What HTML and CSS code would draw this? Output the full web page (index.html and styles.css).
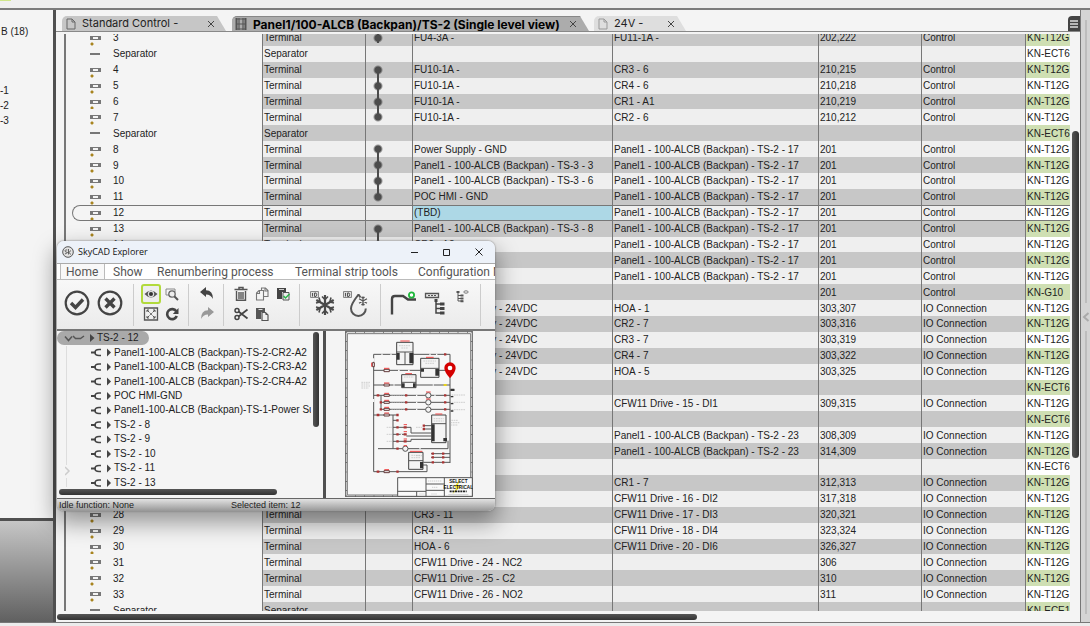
FILE: index.html
```html
<!DOCTYPE html>
<html lang="en">
<head>
<meta charset="utf-8">
<title>SkyCAD</title>
<link rel="stylesheet" href="styles.css">
</head>
<body>
<div class="app">
  <div class="topbar"><span class="topmark"></span></div>
  <div class="work">
    <aside class="side">
      <div class="side-tree">
        <p class="side-root">B (18)</p>
        <p>-1</p>
        <p>-2</p>
        <p>-3</p>
      </div>
      <div class="side-preview"></div>
    </aside>
    <main class="doc">
      <nav class="tabs">
        <div class="tab tab-first">
          <svg class="ico-doc" viewBox="0 0 10 12"><path d="M1 1h5l3 3v7H1zM6 1v3h3" fill="none" stroke="#666"/></svg>
          <a href="#">Standard Control -</a>
          <button class="x" aria-label="Close Standard Control"><svg viewBox="0 0 8 8"><path d="m1 1 6 6m0-6-6 6" stroke="#444"/></svg></button>
        </div>
        <div class="tab tab-active">
          <svg class="ico-strip" viewBox="0 0 12 12"><path d="M1.500 0v12M10.500 0v12" stroke="#555" stroke-width="2"/><path d="M4 0v12M8 0v12M1 1h10M1 6h10M1 11h10" fill="none" stroke="#555" stroke-width="1.200"/></svg>
          <a href="#">Panel1/100-ALCB (Backpan)/TS-2 (Single level view)</a>
          <button class="x" aria-label="Close Panel1"><svg viewBox="0 0 8 8"><path d="m1 1 6 6m0-6-6 6" stroke="#444"/></svg></button>
        </div>
        <div class="tab tab-light">
          <svg class="ico-doc" viewBox="0 0 10 12"><path d="M1 1h5l3 3v7H1zM6 1v3h3" fill="none" stroke="#999"/></svg>
          <a href="#">24V -</a>
          <button class="x" aria-label="Close 24V"><svg viewBox="0 0 8 8"><path d="m1 1 6 6m0-6-6 6" stroke="#444"/></svg></button>
        </div>
        <button class="menu" aria-label="Tab list"><svg viewBox="0 0 12 14"><path d="M2 4h8M2 7h8M2 10h8" stroke="#ddd" stroke-width="1.300"/></svg></button>
      </nav>
      <div class="sheet">
        <div class="clip">
        <table class="grid">
          <colgroup><col class="c-item"><col class="c-kind"><col class="c-link"><col class="c-from"><col class="c-to"><col class="c-wire"><col class="c-func"><col></colgroup>
          <tbody>
          <tr><td class="part">3<td>Terminal<td class="one"><td>FU4-3A -<td>FU11-1A -<td>202,222<td>Control<td>KN-T12G</tr>
          <tr><td class="sep">Separator<td>Separator<td><td><td><td><td><td>KN-ECT6</tr>
          <tr><td class="part">4<td>Terminal<td class="top"><td>FU10-1A -<td>CR3 - 6<td>210,215<td>Control<td>KN-T12G</tr>
          <tr><td class="part">5<td>Terminal<td class="mid"><td>FU10-1A -<td>CR4 - 6<td>210,218<td>Control<td>KN-T12G</tr>
          <tr><td class="part">6<td>Terminal<td class="mid"><td>FU10-1A -<td>CR1 - A1<td>210,219<td>Control<td>KN-T12G</tr>
          <tr><td class="part">7<td>Terminal<td class="end"><td>FU10-1A -<td>CR2 - 6<td>210,212<td>Control<td>KN-T12G</tr>
          <tr><td class="sep">Separator<td>Separator<td><td><td><td><td><td>KN-ECT6</tr>
          <tr><td class="part">8<td>Terminal<td class="top"><td>Power Supply - GND<td>Panel1 - 100-ALCB (Backpan) - TS-2 - 17<td>201<td>Control<td>KN-T12G</tr>
          <tr><td class="part">9<td>Terminal<td class="mid"><td>Panel1 - 100-ALCB (Backpan) - TS-3 - 3<td>Panel1 - 100-ALCB (Backpan) - TS-2 - 17<td>201<td>Control<td>KN-T12G</tr>
          <tr><td class="part">10<td>Terminal<td class="mid"><td>Panel1 - 100-ALCB (Backpan) - TS-3 - 6<td>Panel1 - 100-ALCB (Backpan) - TS-2 - 17<td>201<td>Control<td>KN-T12G</tr>
          <tr><td class="part">11<td>Terminal<td class="end"><td>POC HMI - GND<td>Panel1 - 100-ALCB (Backpan) - TS-2 - 17<td>201<td>Control<td>KN-T12G</tr>
          <tr class="sel"><td class="part">12<td>Terminal<td><td class="tbd">(TBD)<td>Panel1 - 100-ALCB (Backpan) - TS-2 - 17<td>201<td>Control<td>KN-T12G</tr>
          <tr><td class="part">13<td>Terminal<td class="top"><td>Panel1 - 100-ALCB (Backpan) - TS-3 - 8<td>Panel1 - 100-ALCB (Backpan) - TS-2 - 17<td>201<td>Control<td>KN-T12G</tr>
          <tr><td class="part">14<td>Terminal<td class="mid"><td>CR2 - A2<td>Panel1 - 100-ALCB (Backpan) - TS-2 - 17<td>201<td>Control<td>KN-T12G</tr>
          <tr><td class="part">15<td>Terminal<td class="mid"><td>CR3 - A2<td>Panel1 - 100-ALCB (Backpan) - TS-2 - 17<td>201<td>Control<td>KN-T12G</tr>
          <tr><td class="part">16<td>Terminal<td class="end"><td>CR4 - A2<td>Panel1 - 100-ALCB (Backpan) - TS-2 - 17<td>201<td>Control<td>KN-T12G</tr>
          <tr><td class="part">17<td>Terminal<td><td><td><td>201<td>Control<td>KN-G10</tr>
          <tr><td class="part">18<td>Terminal<td class="top"><td>24V Power Supply - 24VDC<td>HOA - 1<td>303,307<td>IO Connection<td>KN-T12G</tr>
          <tr><td class="part">19<td>Terminal<td class="mid"><td>24V Power Supply - 24VDC<td>CR2 - 7<td>303,316<td>IO Connection<td>KN-T12G</tr>
          <tr><td class="part">20<td>Terminal<td class="mid"><td>24V Power Supply - 24VDC<td>CR3 - 7<td>303,319<td>IO Connection<td>KN-T12G</tr>
          <tr><td class="part">21<td>Terminal<td class="mid"><td>24V Power Supply - 24VDC<td>CR4 - 7<td>303,322<td>IO Connection<td>KN-T12G</tr>
          <tr><td class="part">22<td>Terminal<td class="end"><td>24V Power Supply - 24VDC<td>HOA - 5<td>303,325<td>IO Connection<td>KN-T12G</tr>
          <tr><td class="sep">Separator<td>Separator<td><td><td><td><td><td>KN-ECT6</tr>
          <tr><td class="part">23<td>Terminal<td><td>HOA - 2<td>CFW11 Drive - 15 - DI1<td>309,315<td>IO Connection<td>KN-T12G</tr>
          <tr><td class="sep">Separator<td>Separator<td><td><td><td><td><td>KN-ECT6</tr>
          <tr><td class="part">24<td>Terminal<td class="top"><td>CR1 - 11<td>Panel1 - 100-ALCB (Backpan) - TS-2 - 23<td>308,309<td>IO Connection<td>KN-T12G</tr>
          <tr><td class="part">25<td>Terminal<td class="end"><td>CR2 - 11<td>Panel1 - 100-ALCB (Backpan) - TS-2 - 23<td>314,309<td>IO Connection<td>KN-T12G</tr>
          <tr><td class="sep">Separator<td>Separator<td><td><td><td><td><td>KN-ECT6</tr>
          <tr><td class="part">26<td>Terminal<td><td>HOA - 4<td>CR1 - 7<td>312,313<td>IO Connection<td>KN-T12G</tr>
          <tr><td class="part">27<td>Terminal<td><td>CR2 - 11<td>CFW11 Drive - 16 - DI2<td>317,318<td>IO Connection<td>KN-T12G</tr>
          <tr><td class="part">28<td>Terminal<td><td>CR3 - 11<td>CFW11 Drive - 17 - DI3<td>320,321<td>IO Connection<td>KN-T12G</tr>
          <tr><td class="part">29<td>Terminal<td><td>CR4 - 11<td>CFW11 Drive - 18 - DI4<td>323,324<td>IO Connection<td>KN-T12G</tr>
          <tr><td class="part">30<td>Terminal<td><td>HOA - 6<td>CFW11 Drive - 20 - DI6<td>326,327<td>IO Connection<td>KN-T12G</tr>
          <tr><td class="part">31<td>Terminal<td><td>CFW11 Drive - 24 - NC2<td><td>306<td>IO Connection<td>KN-T12G</tr>
          <tr><td class="part">32<td>Terminal<td><td>CFW11 Drive - 25 - C2<td><td>310<td>IO Connection<td>KN-T12G</tr>
          <tr><td class="part">33<td>Terminal<td><td>CFW11 Drive - 26 - NO2<td><td>311<td>IO Connection<td>KN-T12G</tr>
          <tr><td class="sep">Separator<td>Separator<td><td><td><td><td><td>KN-ECE1</tr>
          </tbody>
        </table>
        </div>
        <div class="vrail"><div class="vthumb"></div></div>
      </div>
      <div class="hrail"><div class="hthumb"></div></div>
    </main>
    <aside class="dock">
      <span class="dockline dockline-top"></span>
      <svg class="dockarrow" viewBox="0 0 8 12"><path d="M6.500 2 2 6l4.500 4" fill="none" stroke="#aaa" stroke-width="2"/></svg>
      <span class="dockline"></span>
    </aside>
  </div>
  <div class="foot"></div>

  <section class="win">
    <header class="title">
      <svg class="logo" viewBox="0 0 12 12"><circle cx="6" cy="6" r="5.300" fill="#e4e4e4" stroke="#555"/><path d="M5.300 4Q3 3.500 3 4.800T5 6.300 2.800 8M6.500 3v5.500M9 4.500 6.800 6.500 9 8.500" fill="none" stroke="#555" stroke-width=".9"/></svg>
      <h1>SkyCAD Explorer</h1>
      <button aria-label="Minimize"><svg viewBox="0 0 10 10"><path d="M1 5.500h7" stroke="#222"/></svg></button>
      <button aria-label="Maximize"><svg viewBox="0 0 10 10"><path d="M1.500 2.500h6v6h-6z" fill="none" stroke="#222"/></svg></button>
      <button aria-label="Close"><svg viewBox="0 0 10 10"><path d="m1.500 1.500 7 7m0-7-7 7" stroke="#222"/></svg></button>
    </header>
    <nav class="ribbon">
      <a class="on" href="#">Home</a><a class="r-show" href="#">Show</a><a class="r-ren" href="#">Renumbering process</a><a class="r-term" href="#">Terminal strip tools</a><a class="r-conf" href="#">Configuration Manager</a>
    </nav>
    <div class="tools">
      <div class="big">
        <button aria-label="Accept"><svg viewBox="0 0 26 26"><circle cx="13" cy="13" r="11.300" fill="none" stroke="#444" stroke-width="2.200"/><path d="m7 13 4.500 4.500L19 9.500" fill="none" stroke="#444" stroke-width="3.400"/></svg></button>
        <button aria-label="Cancel"><svg viewBox="0 0 26 26"><circle cx="13" cy="13" r="11.300" fill="none" stroke="#444" stroke-width="2.200"/><path d="m8.500 8.500 9 9m0-9-9 9" stroke="#444" stroke-width="3.400"/></svg></button>
      </div>
      <div class="pair pair-view">
        <button class="lit" aria-label="Visible"><svg viewBox="0 0 16 16"><path d="M1.500 8Q8 1 14.500 8 8 15 1.500 8z" fill="#555"/><circle cx="8" cy="8" r="3.200" fill="#ddd"/><circle cx="8" cy="8" r="2" fill="#333"/></svg></button>
        <button aria-label="Zoom area"><svg viewBox="0 0 16 16"><path d="M2 3h9v3M2 3v6h3" fill="none" stroke="#888"/><circle cx="8" cy="8" r="3.200" fill="#eee" stroke="#666" stroke-width="1.300"/><path d="m10.500 10.500 3.500 3.500" stroke="#555" stroke-width="2"/></svg></button>
        <button aria-label="Fit"><svg viewBox="0 0 16 16"><path d="M1.500 2h13v12h-13z" fill="none" stroke="#555" stroke-width="1.300"/><path d="m4 4 2.500 2.500M12 4 9.500 6.500M4 12l2.500-2.500M12 12 9.500 9.500M4 6V4h2M10 4h2v2M4 10v2h2M10 12h2v-2M8 7v2M7 8h2" fill="none" stroke="#555"/></svg></button>
        <button aria-label="Refresh"><svg viewBox="0 0 16 16"><path d="M12.300 5.300A5 5 0 1 0 12.800 10" fill="none" stroke="#444" stroke-width="2.600"/><path d="M14.500 2v6H8.800z" fill="#444"/></svg></button>
      </div>
      <div class="pair pair-undo">
        <button aria-label="Undo"><svg viewBox="0 0 16 16"><path d="M1 6 7 1v3.200q7 0 7 8.800-2-4.500-7-4.600V11z" fill="#444"/></svg></button>
        <button aria-label="Redo"><svg viewBox="0 0 16 16"><path d="M15 6 9 1v3.200Q2 4.200 2 13q2-4.500 7-4.600V11z" fill="#999"/></svg></button>
      </div>
      <div class="pair pair-edit">
        <button aria-label="Delete"><svg viewBox="0 0 16 16"><path d="M1.500 3.500h13M6 3V1.500h4V3" fill="none" stroke="#555" stroke-width="1.500"/><path d="M3.500 5v9.300h9V5M6 6v7M8 6v7M10 6v7" fill="none" stroke="#555" stroke-width="1.400"/></svg></button>
        <button aria-label="Copy"><svg viewBox="0 0 16 16"><path d="M7.500 4.500V2h4L14 4.500v6H9.500M11 2v3h3M9.500 14h-7V7L5 4.500h4.500zM2.500 7.500H5.500V4.500" fill="none" stroke="#777" stroke-width="1.100"/></svg></button>
        <button aria-label="Paste with options"><svg viewBox="0 0 16 16"><path d="M2 2h9v4H7v7H2z" fill="#444"/><path d="M4 3.500h5" stroke="#ccc"/><path d="M8 6.500h6V14H8z" fill="#eee" stroke="#555"/><path d="m8.500 10 2 2L14.500 8" fill="none" stroke="#2db54a" stroke-width="1.500"/></svg></button>
        <button aria-label="Cut"><svg viewBox="0 0 16 16"><circle cx="4" cy="4.500" r="2" fill="none" stroke="#444" stroke-width="1.500"/><circle cx="4" cy="11.500" r="2" fill="none" stroke="#444" stroke-width="1.500"/><path d="m5.500 5.500 9 7M5.500 10.500l9-7" stroke="#444" stroke-width="1.700"/></svg></button>
        <button aria-label="Paste"><svg viewBox="0 0 16 16"><path d="M2 2h9v4H7v7H2z" fill="#555"/><path d="M4.500 3.500h4" stroke="#ddd"/><path d="M8 6.500h3.500L14 9v5.500H8z" fill="#eee" stroke="#555" stroke-width="1.200"/><path d="M11.500 6.500V9H14z" fill="#555"/></svg></button>
      </div>
      <div class="large large-id">
        <button aria-label="Freeze ID"><svg viewBox="0 0 30 28"><path d="M1.500 1.500h8v6h-8z" fill="#ddd" stroke="#888"/><path d="M3.500 3v3.500M5.500 3H7q1.500 1.700 0 3.500H5.500z" fill="none" stroke="#555"/><g fill="none" stroke="#4a4a4a" stroke-width="2.200"><path d="M16 5v20M7.300 10l17.400 10M7.300 20l17.400-10"/><path d="m13 6.500 3 3 3-3M13 23.500l3-3 3 3M7 13l4.200-1L10 7.500M25 17l-4.200 1L22 22.500M10 22.500l1.200-4.500L7 17M22 7.500 20.800 12l4.200 1" stroke-width="1.600"/></g></svg></button>
        <button aria-label="Thaw ID"><svg viewBox="0 0 30 28"><path d="M.5 1.500h8v6h-8z" fill="#ddd" stroke="#888"/><path d="M2.500 3v3.500M4.500 3H6q1.500 1.700 0 3.500H4.500z" fill="none" stroke="#555"/><path d="M15.500 4.500Q8 14 8 18.500a7.400 7.400 0 0 0 14.800 0M15.500 4.500l2 3" fill="none" stroke="#555" stroke-width="2"/><path d="M20 6.500v9M16 8.700l8 4.600M16 13.300l8-4.600M18.500 7l1.500 1.500L21.500 7M18.500 15l1.500-1.500 1.500 1.500" fill="none" stroke="#555" stroke-width="1.200"/></svg></button>
      </div>
      <div class="large large-route">
        <button aria-label="Add route"><svg viewBox="0 0 30 28"><path d="M4 24.500V9q0-3 3-3h8l5 3.500h8" fill="none" stroke="#444" stroke-width="2.400"/><circle cx="23.500" cy="5" r="2.600" fill="#fff" stroke="#1fb83c" stroke-width="1.800"/></svg></button>
        <button aria-label="Strip tree"><svg viewBox="0 0 30 28"><path d="M3.500 3.500h13v4h-13z" fill="#eee" stroke="#555" stroke-width="1.300"/><path d="M6 5.500h2M9 5.500h2M12 5.500h2" stroke="#555"/><path d="M14 10v13h7M14 14h7M14 18.500h7" fill="none" stroke="#444" stroke-width="1.500"/><path d="M12.500 9h3v3h-3zM18 12.500h4.500v3H18zM18 17h4.500v3H18zM18 21.500h4.500v3H18z" fill="#444"/></svg></button>
        <button aria-label="Tree view"><svg viewBox="0 0 30 28"><path d="M2 2v9h5M2 5.500h4M2 8.500h4" fill="none" stroke="#555"/><path d="M.5 1h3v2h-3zM4.500 4.500h3v2h-3zM4.500 7.500h3v2h-3zM4.500 10.200h3v2h-3z" fill="#555"/><ellipse cx="10" cy="2" rx="2.200" ry="1.200" fill="none" stroke="#777"/></svg></button>
      </div>
    </div>
    <div class="panes">
      <div class="treepane">
        <ul class="tree">
          <li class="root"><svg viewBox="0 0 34 12"><path d="m1 4.500 3.500 4L8 4.500M9 4l2.500 2.500h5L20 4" fill="none" stroke="#555" stroke-width="1.500"/><path d="M26 2v8l4.500-4z" fill="#444"/></svg>TS-2 - 12</li>
          <li>Panel1-100-ALCB (Backpan)-TS-2-CR2-A2</li>
          <li>Panel1-100-ALCB (Backpan)-TS-2-CR3-A2</li>
          <li>Panel1-100-ALCB (Backpan)-TS-2-CR4-A2</li>
          <li>POC HMI-GND</li>
          <li>Panel1-100-ALCB (Backpan)-TS-1-Power Supply-GND</li>
          <li>TS-2 - 8</li>
          <li>TS-2 - 9</li>
          <li>TS-2 - 10</li>
          <li>TS-2 - 11</li>
          <li>TS-2 - 13</li>
        </ul>
        <svg class="plugs" viewBox="0 0 46 159" aria-hidden="true">
          <defs><g id="plug"><path d="M26 0h5" stroke="#444" stroke-width="1.800"/><path d="M36 -3h-2q-4 0-4 3t4 3h2" fill="none" stroke="#444" stroke-width="1.600"/><path d="M42 -4v8l4-4z" fill="#444"/></g></defs>
          <path d="M1.500 15v119M1.500 147v9" stroke="#ddd"/><path d="m0 136 4 4-4 4" fill="none" stroke="#ccc" stroke-width="1.500"/>
          <use href="#plug" y="21.500"/><use href="#plug" y="36"/><use href="#plug" y="50.500"/><use href="#plug" y="65"/><use href="#plug" y="79.500"/><use href="#plug" y="94"/><use href="#plug" y="108.500"/><use href="#plug" y="123"/><use href="#plug" y="137.500"/><use href="#plug" y="152"/>
        </svg>
        <div class="tree-v"></div>
        <div class="tree-h"></div>
      </div>
      <div class="preview">
        <svg class="sheetpic" viewBox="77 18 384 498">
          <path d="M79 20h380v494H79z" fill="#fff" stroke="#777" stroke-width="4"/>
          <path d="M84 26h370v484H84z" fill="#f7f7f7" stroke="#777" stroke-width="3"/>
          <path d="M81 20v494M457 20v494M79 22h380M79 513h380" stroke="#555" stroke-width="4" stroke-dasharray="2 26"/>
          <g fill="none" stroke="#555" stroke-width="3">
            <path d="M163 88v352M163 88h68M282 88h110M392 88v326M163 136h143M359 136h33M163 180h85M290 180h102M163 211h230M185 232h208M185 253h208M185 211v42M163 270h72M221 270v101M221 286h14M221 307h54v17h62M221 328h40M261 333h76M221 349h54v-6h62M176 371h210v-24M163 440h160v-20h-12M312 412h80M335 386h57M335 397h57M312 302h26M312 312h26M392 195h14"/>
            <path d="M163 100v10M163 222v9" stroke="#f7f7f7" stroke-width="4"/>
          </g>
          <path d="M186 88h4M213 88h4M330 88h4M350 88h4M236 136h5M266 136h5M222 180h4M290 211h4M345 211h4M290 232h4M290 253h4M244 328h4M300 371h4M340 180h4" stroke="#f7f7f7" stroke-width="4"/>
          <g fill="#f4f4f4" stroke="#444" stroke-width="3">
            <path d="M232 52h49v67h-49zM304 100h55v57h-55zM247 149h43v39h-43zM337 270h43v83h-43zM268 382h43v51h-43z"/>
          </g>
          <g fill="none" stroke="#555" stroke-width="3"><path d="M232 81h49M257 81v37M305 130h54M247 172h43M337 296h43M268 407h43"/></g>
          <g stroke="#bbb" stroke-width="2" stroke-dasharray="5 2"><path d="M239 62h34M246 69h20M312 108h38M318 115h26M254 156h29M343 281h30M343 288h30M276 391h28M276 398h28M216 211h44M216 232h44M216 253h44M126 172h28M126 177h24M126 183h28M126 189h22M396 286h20M394 293h26M394 300h22M397 210h40M397 232h40M397 254h40M202 307h16M202 328h16M202 349h16M290 307h18M290 392h20"/></g>
          <g fill="#333"><path d="M232 84h9v20h-9zM270 84h12v31h-12zM305 131h9v9h-9zM348 132h11v20h-11zM248 175h8v12h-8zM281 175h8v12h-8zM337 298h9v51h-9zM372 339h11v10h-11zM302 411h9v19h-9zM394 191h11v7h-11z"/></g>
          <g fill="#f4f4f4" stroke="#643c3c" stroke-width="3"><path d="M194 133h16v7h-16zM194 177h16v6h-16zM194 208h16v6h-16zM194 229h16v6h-16zM194 250h16v6h-16zM194 267h16v6h-16zM194 437h16v6h-16zM159 113h6v12h-6z"/>
            <g stroke="#555"><circle cx="327" cy="211" r="8"/><circle cx="327" cy="232" r="8"/><circle cx="327" cy="254" r="8"/><circle cx="258" cy="371" r="8"/></g></g>
          <path d="M243 48h28M320 97h23M258 146h20M348 267h21M272 379h37M194 130h16M194 174h16M195 205h14M195 226h14M195 247h14M195 264h14M195 434h14M157 113v12M320 201h14M320 222h14M253 299h10M253 320h10M253 342h10M253 362h10" stroke="#e44" stroke-width="3"/>
          <path d="M374 88h7M172 211h8M181 232h7M181 253h7M257 211h7M257 232h7M257 253h7M374 211h7M374 232h7M374 253h7M172 270h8M231 270h7M231 286h7M231 307h7M253 307h9M231 328h7M253 328h9M231 349h7M253 349h9M231 371h7M310 302h7M310 312h7M337 386h7M337 397h7M337 412h7M368 386h7M368 397h7M368 412h7M172 440h8M231 440h7" stroke="#a33" stroke-width="7"/>
          <path d="M394 215h8M394 236h8M394 258h8" stroke="#333" stroke-width="4"/>
          <path d="M373 180h9" stroke="#e8d21d" stroke-width="6"/>
          <path d="M392 160q-17-19-17-31a17 17 0 0 1 34 0q0 12-17 31z" fill="#d40000"/><circle cx="392" cy="129" r="7" fill="#fff"/>
          <path d="M235 458h224v56H235zM235 499h85M320 458v56M375 458v56M320 477h55M320 496h55M292 499v15" fill="#fafafa" stroke="#555" stroke-width="3"/>
          <path d="M326 468h42M338 487h18M300 507h15M336 507h18" stroke="#bbb" stroke-width="2" stroke-dasharray="4 2"/>
          <path d="m423 462-19 24 8 2-13 20 26-24-10-2z" fill="#f1e52a"/>
          <text class="plate" x="417" y="474" text-anchor="middle">SELECT</text>
          <text class="plate" x="417" y="491" text-anchor="middle">ELECTRICAL</text>
          <path d="M391 499h51" stroke="#222" stroke-width="5" stroke-dasharray="6 2"/>
          <path d="M387 509h60" stroke="#bbb" stroke-width="2"/>
        </svg>
      </div>
    </div>
    <footer class="status"><span class="idle">Idle function: None</span><span>Selected item: 12</span></footer>
  </section>
</div>
</body>
</html>
```
FILE: styles.css
```css
* { box-sizing: border-box; }
body { margin: 0; background: #e9e9e9; color: #222; font: 10px/15px "Liberation Sans", Arial, sans-serif; }
h1, p, ul { margin: 0; padding: 0; }
button { border: 0; padding: 0; background: none; color: inherit; font: inherit; }
a { color: inherit; text-decoration: none; }
svg { display: block; }

.app { position: relative; display: flex; flex-direction: column; height: 100vh; overflow: hidden; }
.topbar { flex: none; height: 10px; background: #efefef; border-bottom: 2px solid #7c7c7c; }
.topmark { display: block; width: 11px; height: 1px; background: #cfe68a; }
.work { flex: 1; display: flex; min-height: 0; }
.foot { flex: none; height: 4px; border-top: 1px solid #777; background: #ececec; }

.side { flex: none; width: 56px; display: flex; flex-direction: column; border-right: 3px solid #505050; background: #f4f4f4; }
.side-tree { flex: 1; padding-top: 14px; }
.side-root { padding: 0 0 44px 1px; }
.side-tree p + p { line-height: 15px; }
.side-preview { height: 104px; border-top: 3px solid #505050; background: linear-gradient(#c6c6c6, #606060); }

.doc { flex: 1; min-width: 0; display: flex; flex-direction: column; background: #f4f4f4; border-right: 1px solid #777; }
.tabs { flex: none; display: flex; align-items: flex-end; height: 22px; padding-left: 6px; border-bottom: 1px solid #888; }
.tab { display: flex; align-items: center; height: 15px; border-radius: 5px 0 0 0; clip-path: polygon(0 0, calc(100% - 9px) 0, 100% 100%, 0 100%); font: 11px/15px Inter, sans-serif; }
.tab > svg { flex: none; margin-right: 6px; }
.tab a { flex: 1; white-space: nowrap; }
.ico-doc { width: 10px; height: 12px; }
.ico-strip { width: 12px; height: 12px; }
.x { flex: none; width: 8px; }
.x svg { width: 8px; height: 8px; }
.tab-first { width: 164px; margin-right: 6px; padding: 0 11px 0 4px; background: #c6c6c6; }
.tab-active { width: 357px; margin-right: 5px; padding: 0 12px 0 3px; background: #acacac; border-top: 1px solid #888; color: #000; font-weight: 700; font-size: 12px; }
.tab-light { width: 92px; padding: 0 11px 0 4px; background: #dedede; }
.menu { width: 12px; height: 15px; margin-left: auto; background: #444; border-radius: 4px 0 0 0; }

.sheet { flex: 1; min-height: 0; display: flex; padding: 2px 0 0 8px; }
.clip { flex: 1; min-width: 0; overflow: hidden; border-left: 2px solid #777; }
.grid { width: 100%; height: 588px; margin-top: -4px; table-layout: fixed; border-collapse: separate; border-spacing: 0; }
.c-item { width: 196px; }
.c-kind { width: 103px; }
.c-link { width: 47px; }
.c-from { width: 200px; }
.c-to { width: 206px; }
.c-wire { width: 103px; }
.c-func { width: 104px; }
.grid tr { background: #efefef; }
.grid tr:nth-child(odd) { background: #c7c7c7; }
.grid td { padding: 0 0 0 1px; border-left: 1px solid #777; white-space: nowrap; overflow: hidden; line-height: 15px; }
.grid td:first-child { border: 0; padding-left: 47px; background-color: #f4f4f4; background-repeat: no-repeat; }
.grid td:last-child { background: #fff; }
.grid tr:nth-child(odd) td:last-child { background: #cfdfb3; }
.grid .part { background-image: radial-gradient(circle at 26px 14px, #a8841f 1px, transparent 2px), linear-gradient(#f4f4f4, #f4f4f4), linear-gradient(#777, #777); background-size: auto, 5px 2px, 11px 4px; background-position: 0 0, 27px 7px, 24px 6px; }
.grid .sep { background-image: linear-gradient(#777, #777); background-size: 10px 2px; background-position: 24px 7px; }
.grid .one, .grid .top, .grid .mid, .grid .end { background-image: radial-gradient(circle at 12px 8px, #4c4c4c 3px, transparent 5px), linear-gradient(#4c4c4c, #4c4c4c); background-repeat: no-repeat; background-size: auto, 2px 50%; background-position: 0 0, 11px 100%; }
.grid .one { background-size: auto, 2px 10px; background-position: 0 0, 11px 3px; }
.grid .mid { background-size: auto, 2px 100%; background-position: 0 0, 11px 0; }
.grid .end { background-position: 0 0, 11px 0; }
.grid .tbd { background: #add8e6; }
.grid .sel td { box-shadow: inset 0 1px #777, inset 0 -1px #777; }
.grid .sel td:first-child { position: relative; box-shadow: none; }
.sel td:first-child::before { content: ""; position: absolute; inset: 0 0 0 6px; border: 1px solid #777; border-right: 0; border-radius: 8px 0 0 8px; }
.vrail { flex: none; width: 10px; padding: 97px 1px 0 2px; }
.vthumb { height: 327px; border-radius: 4px; background: linear-gradient(90deg, #555, #333); }
.hrail { flex: none; height: 11px; padding: 3px 0 0 1px; }
.hthumb { width: 640px; max-width: 100%; height: 6px; border-radius: 3px; background: linear-gradient(#555, #333); }

.dock { flex: none; width: 9px; display: flex; flex-direction: column; align-items: center; background: #d4d4d4; }
.dockline { flex: 1; width: 2px; background: #bdbdbd; margin-bottom: 8px; }
.dockline-top { margin: 10px 0 8px; }
.dockarrow { width: 8px; height: 12px; margin-bottom: 8px; }

.win { position: absolute; left: 57px; top: 241px; width: 438px; display: flex; flex-direction: column; overflow: hidden; border-radius: 7px; background: #f4f4f4; box-shadow: 0 0 2px #666, 0 10px 22px 2px rgba(0, 0, 0, .38); }
.title { display: flex; align-items: center; height: 22px; padding: 0 11px 0 5px; background: #edf2f9; }
.logo { width: 12px; height: 12px; margin-right: 4px; }
.title h1 { flex: 1; font: 9px/14px "Open Sans", "Noto Sans", sans-serif; color: #111; }
.title button { width: 10px; margin-left: 22px; }
.title button svg { width: 10px; height: 10px; }
.ribbon { display: flex; height: 17px; border-top: 1px solid #aaa; border-bottom: 1px solid #bbb; background: #fff; color: #555; font: 12px/16px Roboto, sans-serif; white-space: nowrap; overflow: hidden; }
.ribbon a { flex: none; }
.ribbon .on { width: 45px; margin-left: 3px; padding-left: 5px; border: 1px solid #bbb; border-width: 0 1px; background: #f8f8f8; }
.r-show { width: 52px; padding-left: 8px; }
.r-ren { width: 138px; }
.r-term { width: 123px; }
.tools { display: flex; height: 51px; padding: 4px 0 0 7px; background: linear-gradient(#f8f8f8, #ebebeb); border-bottom: 2px solid #777; }
.tools > div { flex: none; height: 42px; border-right: 1px solid #ccc; }
.tools button { display: grid; place-items: center; }
.tools > .big { width: 70px; display: flex; align-items: center; gap: 7px; padding-bottom: 4px; }
.big svg { width: 26px; height: 26px; }
.pair { display: grid; grid-template-rows: 20px 20px; align-content: start; }
.pair svg { width: 16px; height: 16px; }
.pair button { width: 20px; height: 20px; }
.tools > .pair-view { width: 55px; grid-template-columns: 21px 21px; padding-left: 7px; }
.tools .lit { border: 2px solid #b2da3c; border-radius: 3px; background: #eee; }
.tools > .pair-undo { width: 35px; padding-left: 8px; }
.tools > .pair-edit { width: 76px; padding-left: 7px; grid-template-columns: 21px 21px 21px; }
.large { display: flex; align-items: flex-start; gap: 4px; padding-top: 6px; }
.large svg { width: 30px; height: 28px; }
.tools > .large-id { width: 81px; padding-left: 9px; }
.tools > .large-route { width: 100px; padding-left: 7px; }
.panes { display: flex; height: 167px; }
.treepane { position: relative; flex: none; width: 266px; padding-bottom: 8px; }
.tree { display: flex; flex-direction: column; width: 254px; height: 100%; list-style: none; overflow: hidden; }
.tree li { flex: 1; display: flex; align-items: center; padding-left: 57px; line-height: 14px; white-space: nowrap; }
.tree .root { width: 92px; padding-left: 7px; border-radius: 8px; background: #a9a9a9; }
.root svg { flex: none; width: 34px; height: 12px; margin-right: -1px; }
.plugs { position: absolute; left: 8px; top: 0; width: 46px; height: 159px; }
.tree-v { position: absolute; left: 256px; top: 1px; width: 6px; height: 95px; border-radius: 3px; background: linear-gradient(90deg, #555, #333); }
.tree-h { position: absolute; left: 2px; bottom: 3px; width: 218px; height: 6px; border-radius: 3px; background: linear-gradient(#555, #333); }
.preview { flex: 1; padding-left: 19px; border-left: 3px solid #505050; }
.sheetpic { width: 128px; height: 166px; }
.plate { font: 700 14px "Liberation Sans", sans-serif; fill: #111; }
.status { display: flex; height: 13px; padding-left: 2px; border-top: 1px solid #666; background: linear-gradient(#e2e2e2, #979797); font-size: 9px; line-height: 12px; }
.idle { width: 172px; }
```
